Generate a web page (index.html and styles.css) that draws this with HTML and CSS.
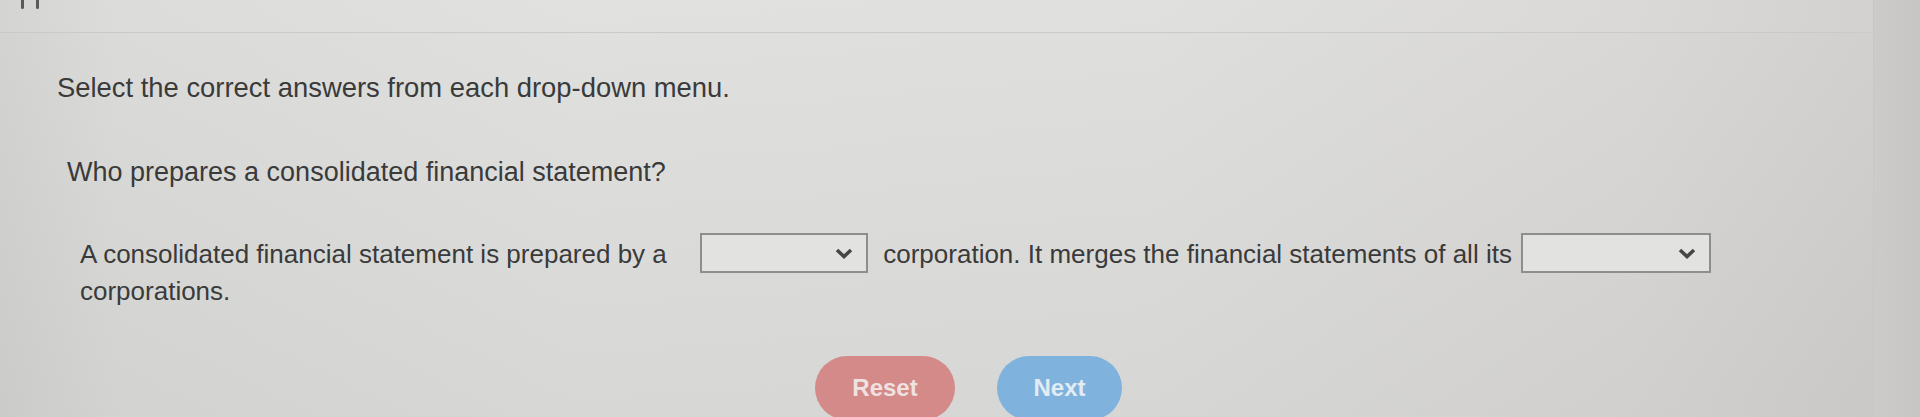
FILE: index.html
```html
<!DOCTYPE html>
<html lang="en">
<head>
<meta charset="utf-8">
<title>Consolidated financial statement</title>
<link rel="stylesheet" href="styles.css">
</head>
<body>
<div class="screen">
  <div class="main">
    <header class="topbar">
      <span class="mark"></span><span class="mark"></span>
    </header>
    <section class="content">
      <p class="instructions">Select the correct answers from each drop-down menu.</p>
      <p class="question">Who prepares a consolidated financial statement?</p>
      <p class="sentence">A consolidated financial statement is prepared by a <span class="dropdown dd1"><svg class="chev" viewBox="0 0 18 11" width="18" height="11"><path d="M2 2 L9 8.5 L16 2" /></svg></span> corporation. It merges the financial statements of all its <span class="dropdown dd2"><svg class="chev" viewBox="0 0 18 11" width="18" height="11"><path d="M2 2 L9 8.5 L16 2" /></svg></span> corporations.</p>
      <div class="actions">
        <button class="btn reset" type="button">Reset</button>
        <button class="btn next" type="button">Next</button>
      </div>
    </section>
  </div>
  <div class="edge"></div>
</div>
</body>
</html>
```
FILE: styles.css
```css
html, body {
  margin: 0;
  padding: 0;
}
body {
  width: 1920px;
  height: 417px;
  overflow: hidden;
  font-family: "Liberation Sans", Arial, sans-serif;
  color: #3a3a3a;
}
.screen {
  display: flex;
  width: 1920px;
  height: 417px;
  background:
    linear-gradient(to bottom, rgba(255,255,255,0.03), rgba(0,0,0,0.035)),
    linear-gradient(to right, #d2d3d1 0%, #dadbd9 6%, #dfe0de 30%, #dededc 60%, #d8d7d5 85%, #d0cecc 100%);
}
.main {
  flex: 1;
  min-width: 0;
}
.edge {
  width: 46px;
  border-left: 1px solid #c9c7c5;
  background: linear-gradient(to right, #cdcbc9, #c8c6c4);
}
.topbar {
  height: 32px;
  border-bottom: 1px solid #cacac8;
  padding-left: 21px;
  display: flex;
  gap: 12px;
  align-items: flex-start;
  background: rgba(255,255,255,0.04);
}
.mark {
  width: 3px;
  height: 9px;
  background: #5a5a5a;
  border-radius: 0 0 2px 2px;
}
.content {
  padding-left: 57px;
}
.instructions {
  margin: 39px 0 0;
  font-size: 27.4px;
  line-height: 32px;
}
.question {
  margin: 52px 0 0;
  padding-left: 10px;
  font-size: 27px;
  line-height: 32px;
}
.sentence {
  margin: 48px 0 0;
  padding-left: 23px;
  width: 1700px;
  font-size: 26px;
  line-height: 37px;
}
.dropdown {
  display: inline-flex;
  align-items: center;
  justify-content: flex-end;
  box-sizing: border-box;
  height: 40px;
  border: 2px solid #8e8e8e;
  background: #e2e3e1;
  vertical-align: middle;
  margin-top: -8px;
  margin-bottom: -2px;
  padding-right: 13px;
}
.dd1 {
  width: 168px;
  margin-left: 26px;
  margin-right: 8px;
}
.dd2 {
  width: 190px;
  margin-left: 2px;
  margin-right: 6px;
}
.chev path {
  fill: none;
  stroke: #464646;
  stroke-width: 3.6;
  stroke-linejoin: miter;
}
.actions {
  display: flex;
  justify-content: flex-start;
  gap: 42px;
  margin-top: 46px;
  padding-left: 758px;
}
.btn {
  height: 64px;
  border: none;
  border-radius: 32px;
  font-family: "Liberation Sans", Arial, sans-serif;
  font-weight: bold;
  font-size: 24px;
  padding: 0;
}
.reset {
  width: 140px;
  background: #d48a89;
  color: #efe2e1;
}
.next {
  width: 125px;
  background: #7fb3dd;
  color: #e2ecf4;
}
```
